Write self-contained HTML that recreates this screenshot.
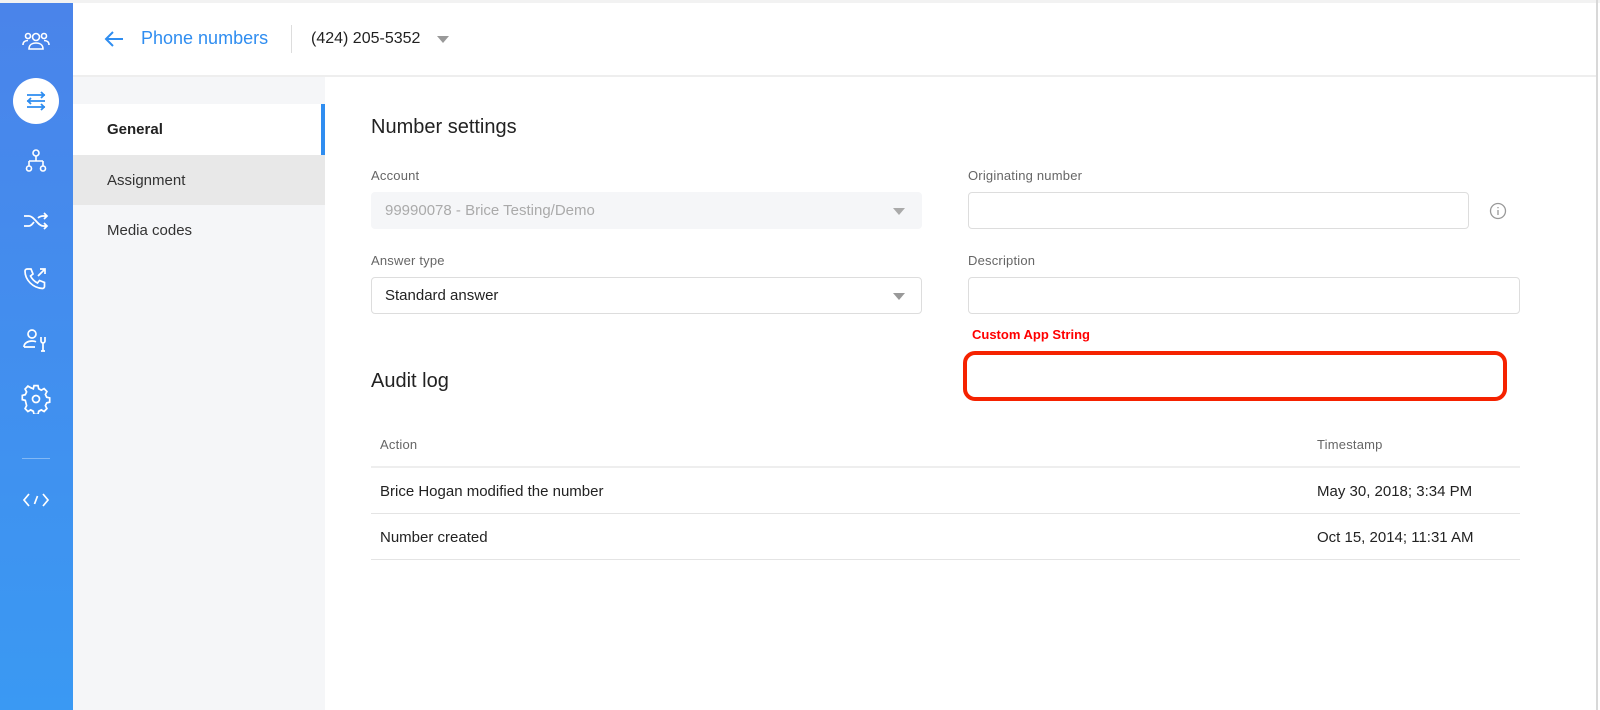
<!DOCTYPE html>
<html><head><meta charset="utf-8"><style>
*{box-sizing:border-box;margin:0;padding:0}
body{width:1600px;height:710px;overflow:hidden;background:#fff;font-family:"Liberation Sans",Arial,sans-serif;position:relative;color:#222}
.a{position:absolute}
.side{left:0;top:3px;width:73px;height:707px;background:linear-gradient(#4a84ea,#3a99f3)}
.ic{position:absolute;left:21px;width:30px;height:30px}
.lbl{font-size:13px;color:#666;letter-spacing:.2px}
.inp{border:1px solid #ddd;border-radius:4px;background:#fff}
.tri{position:absolute;width:0;height:0;border-left:6px solid transparent;border-right:6px solid transparent;border-top:7px solid #999}
.t{font-size:15px;color:#222}
</style></head><body>
<div class="a" style="left:0;top:0;width:1600px;height:3px;background:#f2f2f2"></div>
<div class="a" style="left:1596px;top:0;width:2px;height:710px;background:#d8d8d8"></div>
<div class="a side"></div>
<!-- icons -->
<svg class="ic" style="top:26px" viewBox="0 0 30 30" fill="none" stroke="#fff" stroke-width="1.6"><circle cx="15" cy="11" r="3.5"/><path d="M8 23c0-4 3-6 7-6s7 2 7 6z"/><circle cx="7" cy="10" r="2.5"/><circle cx="23" cy="10" r="2.5"/><path d="M2 19c0-3 2-4.5 5-4.5M28 19c0-3-2-4.5-5-4.5"/></svg>
<div class="a" style="left:13px;top:78px;width:46px;height:46px;border-radius:50%;background:#fff"></div>
<svg class="ic" style="top:86px;left:21px" viewBox="0 0 30 30" fill="none" stroke="#2f8df0" stroke-width="1.8"><path d="M6 9h18M20 6l3 3-3 3M6 15h18M10 12l-3 3 3 3M6 21h18M20 18l3 3-3 3"/></svg>
<svg class="ic" style="top:146px" viewBox="0 0 30 30" fill="none" stroke="#fff" stroke-width="1.6"><circle cx="15" cy="7" r="3"/><path d="M15 10v5M8 15h14M8 15v5M22 15v5"/><circle cx="8" cy="22.5" r="2.5"/><circle cx="22" cy="22.5" r="2.5"/></svg>
<svg class="ic" style="top:206px" viewBox="0 0 30 30" fill="none" stroke="#fff" stroke-width="1.7"><path d="M3 10h5c5 0 9 10 14 10h4M23 17l3 3-3 3M3 20h5c2 0 3.5-2 5-4M17 12c1.5-1.5 3-2 5-2h4M23 7l3 3-3 3"/></svg>
<svg class="ic" style="top:265px" viewBox="0 0 30 30" fill="none" stroke="#fff" stroke-width="1.7"><path d="M6 4l4 0 2 5-2.5 2c1.5 3 4 5.5 7 7l2-2.5 5 2v4c0 1-1 2-2 2C12 23 4 15 4 6c0-1 1-2 2-2z"/><path d="M17 11l7-7M19 4h5v5"/></svg>
<svg class="ic" style="top:325px" viewBox="0 0 30 30" fill="none" stroke="#fff" stroke-width="1.7"><circle cx="11" cy="9" r="4"/><path d="M3 22c0-4 4-6 8-6 2 0 3 .3 4 .8M3 22h11"/><path d="M20 12v4c0 1 1 2 2 2s2-1 2-2v-4M22 18v8M20 26h4"/></svg>
<svg class="ic" style="top:384px" viewBox="0 0 30 30" fill="none" stroke="#fff" stroke-width="1.7"><circle cx="15" cy="15" r="3.5"/><path d="M13 3h4l.7 3 2.6 1.3 2.8-1.5 2.8 2.8-1.5 2.8L25.7 14l3 .7v4l-3 .7-1.3 2.6 1.5 2.8-2.8 2.8-2.8-1.5-2.6 1.3-.7 3h-4l-.7-3-2.6-1.3-2.8 1.5-2.8-2.8 1.5-2.8L4.300 17l-3-.7v-4l3-.7 1.3-2.6-1.5-2.8 2.8-2.8 2.8 1.5L12.3 6z" transform="translate(0,-1.5) scale(1 1.05)"/></svg>
<div class="a" style="left:22px;top:458px;width:28px;height:1px;background:rgba(255,255,255,.35)"></div>
<svg class="ic" style="top:485px" viewBox="0 0 30 30" fill="none" stroke="#fff" stroke-width="1.7"><path d="M8 9l-5 6 5 6M22 9l5 6-5 6M16.5 11l-3 8"/></svg>

<!-- header -->
<div class="a" style="left:73px;top:75px;width:1523px;height:2px;background:#eee"></div>
<svg class="a" style="left:103px;top:29px" width="22" height="20" viewBox="0 0 22 20" fill="none" stroke="#2f8df0" stroke-width="2"><path d="M20 10H3M10 3L3 10l7 7"/></svg>
<div class="a" style="left:141px;top:28px;font-size:18px;color:#2f8df0">Phone numbers</div>
<div class="a" style="left:291px;top:25px;width:1px;height:28px;background:#ddd"></div>
<div class="a" style="left:311px;top:30px;font-size:16px;color:#222">(424) 205-5352</div>
<div class="tri" style="left:437px;top:36px"></div>

<!-- left nav -->
<div class="a" style="left:73px;top:77px;width:252px;height:633px;background:#f5f6f8"></div>
<div class="a" style="left:73px;top:104px;width:252px;height:51px;background:#fff"></div>
<div class="a" style="left:321px;top:104px;width:4px;height:51px;background:#2f8df0"></div>
<div class="a" style="left:73px;top:155px;width:252px;height:50px;background:#e8e8e8"></div>
<div class="a" style="left:107px;top:121px;font-size:15px;font-weight:bold;color:#222">General</div>
<div class="a" style="left:107px;top:172px;font-size:15px;color:#333">Assignment</div>
<div class="a" style="left:107px;top:222px;font-size:15px;color:#333">Media codes</div>

<!-- content -->
<div class="a" style="left:371px;top:116px;font-size:20px;color:#222">Number settings</div>
<div class="a lbl" style="left:371px;top:168px">Account</div>
<div class="a" style="left:371px;top:192px;width:551px;height:37px;background:#f5f6f8;border-radius:4px"></div>
<div class="a" style="left:385px;top:202px;font-size:15px;color:#aaa">99990078 - Brice Testing/Demo</div>
<div class="tri" style="left:893px;top:208px;border-top-color:#aaa"></div>
<div class="a lbl" style="left:968px;top:168px">Originating number</div>
<div class="a inp" style="left:968px;top:192px;width:501px;height:37px"></div>
<svg class="a" style="left:1489px;top:202px" width="18" height="18" viewBox="0 0 18 18" fill="none" stroke="#999" stroke-width="1.3"><circle cx="9" cy="9" r="7.5"/><path d="M9 8v5M9 5v1.3"/></svg>
<div class="a lbl" style="left:371px;top:253px">Answer type</div>
<div class="a inp" style="left:371px;top:277px;width:551px;height:37px"></div>
<div class="a t" style="left:385px;top:287px">Standard answer</div>
<div class="tri" style="left:893px;top:293px"></div>
<div class="a lbl" style="left:968px;top:253px">Description</div>
<div class="a inp" style="left:968px;top:277px;width:552px;height:37px"></div>
<div class="a" style="left:972px;top:327px;font-size:13px;font-weight:bold;color:#f00">Custom App String</div>
<div class="a" style="left:963px;top:351px;width:544px;height:50px;border:4px solid #f52200;border-radius:12px"></div>

<div class="a" style="left:371px;top:370px;font-size:20px;color:#222">Audit log</div>
<div class="a lbl" style="left:380px;top:437px">Action</div>
<div class="a lbl" style="left:1317px;top:437px">Timestamp</div>
<div class="a" style="left:371px;top:466px;width:1149px;height:2px;background:#eee"></div>
<div class="a t" style="left:380px;top:483px">Brice Hogan modified the number</div>
<div class="a t" style="left:1317px;top:483px">May 30, 2018; 3:34 PM</div>
<div class="a" style="left:371px;top:513px;width:1149px;height:1px;background:#e4e4e4"></div>
<div class="a t" style="left:380px;top:529px">Number created</div>
<div class="a t" style="left:1317px;top:529px">Oct 15, 2014; 11:31 AM</div>
<div class="a" style="left:371px;top:559px;width:1149px;height:1px;background:#e4e4e4"></div>
</body></html>
